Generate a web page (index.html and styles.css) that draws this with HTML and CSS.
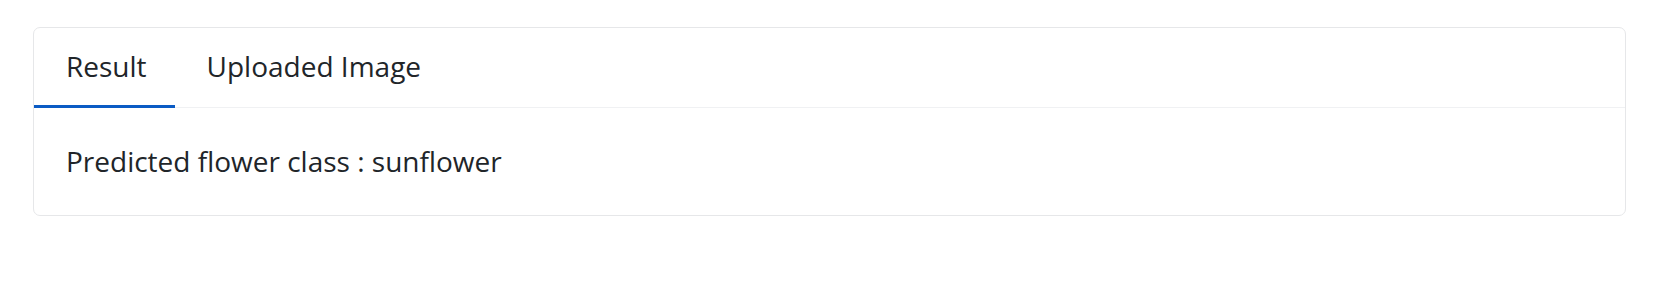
FILE: index.html
```html
<!DOCTYPE html>
<html>
<head>
<meta charset="utf-8">
<link rel="stylesheet" href="styles.css">
</head>
<body>
<div class="card">
  <div class="tabs">
    <div class="tab active">Result</div>
    <div class="tab">Uploaded Image</div>
  </div>
  <div class="panel">
    <p class="result">Predicted flower class : sunflower</p>
  </div>
</div>
</body>
</html>
```

FILE: styles.css
```css
html, body {
  margin: 0;
  padding: 0;
  background: #ffffff;
}
body {
  padding: 27px 35px 0 33px;
  font-family: "Open Sans", "Noto Sans", sans-serif;
  color: #212529;
}
.card {
  border: 1px solid #e6e7e9;
  border-radius: 7px;
  height: 189px;
  box-sizing: border-box;
  background: #fff;
  overflow: hidden;
}
.tabs {
  display: flex;
  height: 80px;
  border-bottom: 1px solid #f0f1f3;
  box-sizing: border-box;
}
.tab {
  padding: 0 31px 0 32px;
  font-size: 28px;
  line-height: 76px;
  border-bottom: 3px solid transparent;
  margin-bottom: -1px;
}
.tab.active {
  padding: 0 28px 0 32px;
  border-bottom-color: #0a5bc4;
}
.panel {
  padding: 0 32px;
}
.result {
  margin: 0;
  font-size: 28px;
  line-height: 106px;
}
```
